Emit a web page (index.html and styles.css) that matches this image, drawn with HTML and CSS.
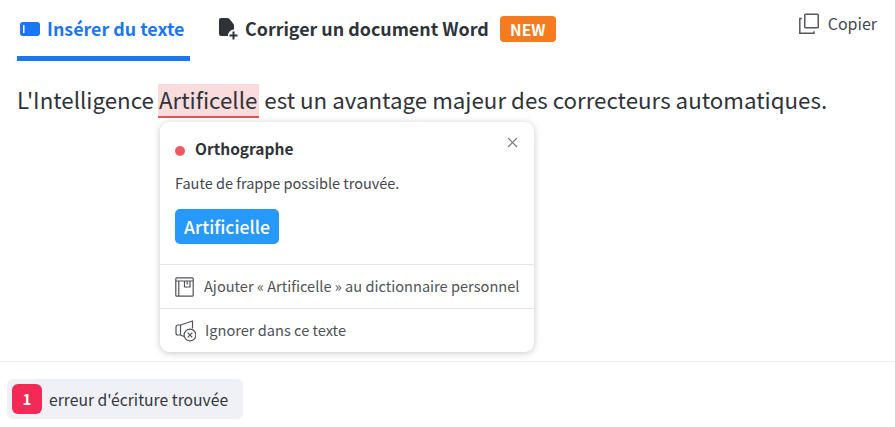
FILE: index.html
```html
<!DOCTYPE html>
<html lang="fr">
<head>
<meta charset="utf-8">
<title>Correcteur</title>
<link rel="stylesheet" href="styles.css">
</head>
<body>
<header class="tabs">
  <div class="tab tab-active">
    <svg class="icon-text" width="20" height="14" viewBox="0 0 20 14"><path fill="#1a76f2" fill-rule="evenodd" d="M3 0h14a3 3 0 0 1 3 3v8a3 3 0 0 1-3 3H3a3 3 0 0 1-3-3V3a3 3 0 0 1 3-3zM3 3v8h1.500V3z"/></svg>
    <span>Insérer du texte</span>
  </div>
  <div class="tab tab-word">
    <svg class="icon-doc" width="20" height="24" viewBox="0 0 20 24"><path fill="#2f3339" d="M3 1h6c1 0 1.800.4 2.500 1.100l4 5c.4.500.5 1 .5 1.600v3.800a6 6 0 0 0-6 6.500H3a2 2 0 0 1-2-2V3a2 2 0 0 1 2-2z"/><path stroke="#2f3339" stroke-width="2" d="M15.500 14.500v8M11.500 18.500h8"/></svg>
    <span>Corriger un document Word</span>
    <span class="new">NEW</span>
  </div>
  <div class="copy">
    <svg width="20" height="21" viewBox="0 0 20 21" fill="none" stroke="#54575c" stroke-width="1.500"><rect x="5.750" y="1.250" width="13.500" height="13.500" rx=".8"/><path d="M2.800 5.500H.8v14.700h14.200v-2"/></svg>
    <span>Copier</span>
  </div>
</header>
<main class="editor">
  <p class="sentence">L'Intelligence <span class="mistake">Artificelle</span> est un avantage majeur des correcteurs automatiques.</p>
  <section class="popover">
    <div class="pop-body">
      <svg class="close" width="11" height="11" viewBox="0 0 11 11" stroke="#77797d" stroke-width="1.100"><path d="M1 1l9 9M10 1l-9 9"/></svg>
      <div class="pop-title"><span class="dot"></span><strong>Orthographe</strong></div>
      <p class="pop-msg">Faute de frappe possible trouvée.</p>
      <button class="suggest">Artificielle</button>
    </div>
    <div class="pop-row">
      <svg width="19" height="20" viewBox="0 0 19 20" fill="none" stroke="#505358" stroke-width="1.200"><rect x=".8" y=".8" width="17.400" height="18.400" rx="1"/><path d="M.8 4h17.400M3.800 4v15M9.500 4v6h5.500V4M12.200 4v3.500"/></svg>
      <span>Ajouter « Artificelle » au dictionnaire personnel</span>
    </div>
    <div class="pop-row">
      <svg width="21" height="24" viewBox="0 0 21 24" fill="none" stroke="#505358" stroke-width="1.200"><path d="M5.500 7H3a2 2 0 0 0-2 2v6a2 2 0 0 0 2 2h2.500zM5.500 7L17.500 3v7.500M5.500 17l3.500 1.500"/><circle cx="15" cy="17" r="5.900"/><path d="M12.700 14.700l4.600 4.600M17.300 14.700l-4.600 4.600"/></svg>
      <span>Ignorer dans ce texte</span>
    </div>
  </section>
</main>
<footer class="status">
  <div class="pill"><span class="count">1</span><span class="pill-text">erreur d'écriture trouvée</span></div>
</footer>
</body>
</html>
```
FILE: styles.css
```css
* { box-sizing: border-box; }
html, body { margin: 0; height: 100%; overflow: hidden; }
body {
  background: #fff;
  color: #2f3339;
  font-family: "Noto Sans CJK SC", "Noto Sans", sans-serif;
}
.tabs {
  display: flex;
  align-items: flex-start;
  height: 61px;
  padding-left: 17px;
}
.tab {
  display: flex;
  align-items: center;
  height: 61px;
  font-size: 17.850px;
  font-weight: 700;
  line-height: 24px;
  white-space: nowrap;
}
.tab-active {
  width: 173px;
  padding-left: 3px;
  padding-bottom: 1px;
  color: #1a76f2;
  border-bottom: 5px solid #1a76f2;
}
.icon-text { margin-right: 7px; margin-top: 2px; }
.tab-word { margin-left: 28px; padding-bottom: 5px; }
.icon-doc { margin-right: 7px; margin-top: 1px; }
.new {
  margin-left: 11px;
  margin-top: 2px;
  width: 56px;
  height: 26px;
  border-radius: 4px;
  background: #f47b20;
  color: #fff;
  font-size: 15.500px;
  line-height: 26px;
  text-align: center;
}
.copy {
  display: flex;
  align-items: center;
  gap: 9px;
  margin-left: auto;
  margin-right: 18px;
  height: 46px;
  font-size: 16px;
  color: #44484e;
  line-height: 20px;
}
.editor {
  position: relative;
  height: 301px;
  padding: 21px 17px 0;
  border-bottom: 1px solid #ececf0;
}
.sentence {
  margin: 0;
  font-size: 22.320px;
  line-height: 34px;
  white-space: nowrap;
}
.mistake {
  display: inline-block;
  height: 34px;
  line-height: 31px;
  margin-left: -1px;
  padding: 0 2px 0 1px;
  background: #fadcdc;
  border-bottom: 2px solid #e5565b;
}
.popover {
  position: absolute;
  left: 160px;
  top: 61px;
  width: 374px;
  height: 230px;
  background: #fff;
  border-radius: 9px;
  box-shadow: 0 1px 7px rgba(0, 0, 0, .22);
}
.pop-body {
  position: relative;
  height: 143px;
  padding: 14px 15px 0;
  border-bottom: 1px solid #e4e4ec;
}
.close { position: absolute; top: 15px; right: 16px; }
.pop-title {
  display: flex;
  align-items: center;
  font-size: 15.500px;
  line-height: 24px;
}
.pop-title strong { font-weight: 700; }
.dot {
  width: 10px;
  height: 10px;
  margin-top: 5px;
  margin-right: 10px;
  border-radius: 50%;
  background: #ee5a5f;
}
.pop-msg {
  margin: 11px 0 0;
  font-size: 14.500px;
  line-height: 24px;
  color: #44484e;
}
.suggest {
  display: block;
  margin-top: 14px;
  width: 104px;
  height: 35px;
  padding: 0;
  border: 0;
  border-radius: 5px;
  background: #2699fb;
  color: #fff;
  font-family: inherit;
  font-size: 17.600px;
  font-weight: 500;
  line-height: 35px;
}
.pop-row {
  display: flex;
  align-items: center;
  gap: 10px;
  height: 43px;
  padding-bottom: 2px;
  padding-left: 15px;
  font-size: 14.600px;
  line-height: 20px;
  color: #505358;
}
.pop-row svg { margin-top: 2px; }
.pop-row + .pop-row {
  height: 44px;
  border-top: 1px solid #e4e4ec;
  gap: 9px;
}
.pop-row + .pop-row svg { margin-top: 0; }
.status { padding: 17px 7px 0; }
.pill {
  display: flex;
  align-items: center;
  gap: 7px;
  width: 236px;
  height: 40px;
  padding-left: 5px;
  border-radius: 6px;
  background: #f0f1f7;
  font-size: 15.700px;
  color: #33373d;
}
.pill-text { white-space: nowrap; }
.count {
  width: 30px;
  height: 30px;
  border-radius: 6px;
  background: #f42a56;
  color: #fff;
  font-weight: 700;
  font-size: 15px;
  line-height: 30px;
  text-align: center;
}
```
